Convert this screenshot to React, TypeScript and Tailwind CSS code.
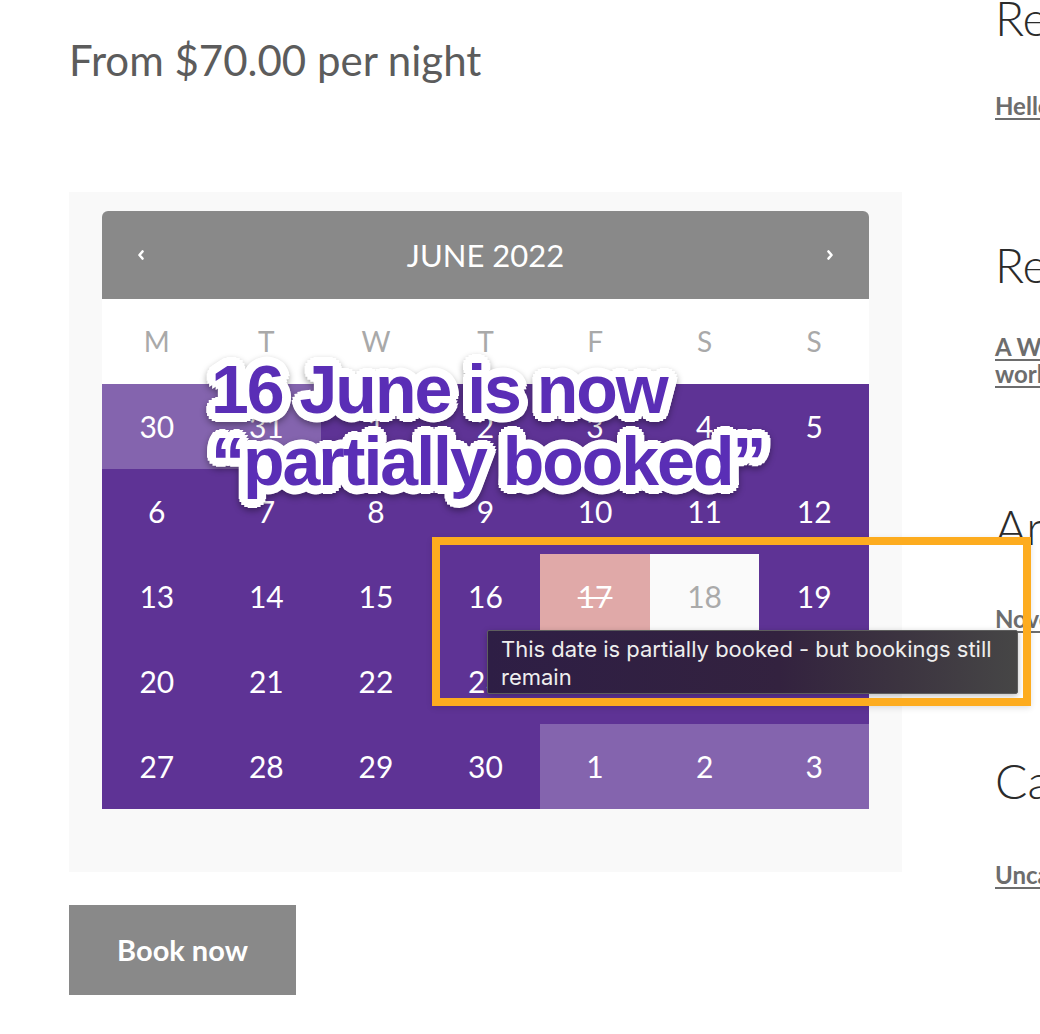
import React from 'react';

type Day = { n: number; kind?: 'other' | 'booked' | 'off' };

const weeks: Day[][] = [
  [{ n: 30, kind: 'other' }, { n: 31, kind: 'other' }, { n: 1 }, { n: 2 }, { n: 3 }, { n: 4 }, { n: 5 }],
  [{ n: 6 }, { n: 7 }, { n: 8 }, { n: 9 }, { n: 10 }, { n: 11 }, { n: 12 }],
  [{ n: 13 }, { n: 14 }, { n: 15 }, { n: 16 }, { n: 17, kind: 'booked' }, { n: 18, kind: 'off' }, { n: 19 }],
  [{ n: 20 }, { n: 21 }, { n: 22 }, { n: 23 }, { n: 24 }, { n: 25 }, { n: 26 }],
  [{ n: 27 }, { n: 28 }, { n: 29 }, { n: 30 }, { n: 1, kind: 'other' }, { n: 2, kind: 'other' }, { n: 3, kind: 'other' }],
];

const weekdays = ['M', 'T', 'W', 'T', 'F', 'S', 'S'];

function cellClass(kind?: Day['kind']) {
  if (kind === 'other') return 'bg-[#8464ae] text-white';
  if (kind === 'booked') return 'bg-[#e0a9a8] text-white line-through decoration-white decoration-2';
  if (kind === 'off') return 'bg-[#fafafa] text-[#aaaaaa]';
  return 'bg-[#5e3395] text-white';
}

function Chevron({ dir }: { dir: 'left' | 'right' }) {
  return (
    <svg width="10" height="14" viewBox="0 0 10 14" fill="none">
      <path
        d={dir === 'left' ? 'M6.5 3.5L3.5 7l3 3.5' : 'M3.5 3.5l3 3.5-3 3.5'}
        stroke="white"
        strokeWidth="2.6"
        strokeLinecap="round"
        strokeLinejoin="round"
      />
    </svg>
  );
}

function Calendar() {
  return (
    <div className="w-[767px]">
      <div className="h-[88px] bg-[#898989] rounded-t-[6px] flex items-center justify-between px-[34px]">
        <Chevron dir="left" />
        <span className="text-white text-[31px]">JUNE 2022</span>
        <Chevron dir="right" />
      </div>
      <div className="grid grid-cols-7 h-[85px] bg-white">
        {weekdays.map((d, i) => (
          <div key={i} className="flex items-center justify-center text-[28px] text-[#a9a9a9]">
            {d}
          </div>
        ))}
      </div>
      {weeks.map((week, wi) => (
        <div key={wi} className="grid grid-cols-7 h-[85px]">
          {week.map((day, di) => (
            <div key={di} className={`flex items-center justify-center text-[30px] ${cellClass(day.kind)}`}>
              {day.n}
            </div>
          ))}
        </div>
      ))}
    </div>
  );
}

function Sidebar() {
  const heading = 'text-[48px] font-light leading-[1.2] text-[#2b2b2b] whitespace-nowrap';
  const link = 'text-[24px] font-bold leading-[27px] text-[#6d6d6d] underline underline-offset-[3px] whitespace-nowrap';
  return (
    <div className="ml-[93px] w-[320px] shrink-0 flex flex-col mt-[-11px]">
      <h2 className={heading}>Recent Posts</h2>
      <a className={`${link} mt-[45px]`}>Hello world!</a>
      <h2 className={`${heading} mt-[117px]`}>Recent Comments</h2>
      <a className={`${link} mt-[40px]`}>A WordPress Commenter on</a>
      <a className={link}>world!</a>
      <h2 className={`${heading} mt-[111px]`}>Archives</h2>
      <a className={`${link} mt-[49px]`}>November 2021</a>
      <h2 className={`${heading} mt-[120px]`}>Categories</h2>
      <a className={`${link} mt-[52px]`}>Uncategorized</a>
    </div>
  );
}

const outline =
  '[text-shadow:9px_0_0_#fff,8.3px_3.4px_0_#fff,6.4px_6.4px_0_#fff,3.4px_8.3px_0_#fff,0_9px_0_#fff,-3.4px_8.3px_0_#fff,-6.4px_6.4px_0_#fff,-8.3px_3.4px_0_#fff,-9px_0_0_#fff,-8.3px_-3.4px_0_#fff,-6.4px_-6.4px_0_#fff,-3.4px_-8.3px_0_#fff,0_-9px_0_#fff,3.4px_-8.3px_0_#fff,6.4px_-6.4px_0_#fff,8.3px_-3.4px_0_#fff,5px_0_0_#fff,-5px_0_0_#fff,0_5px_0_#fff,0_-5px_0_#fff]';

export default function App() {
  return (
    <div className="relative w-full h-[1034px] overflow-hidden bg-white font-['Lato','Noto_Sans',sans-serif]">
      <div className="flex pl-[69px]">
        <div className="w-[833px] shrink-0 pt-[35px]">
          <p className="text-[42px] leading-[1.2] text-[#5c5c5c]">From $70.00 per night</p>
          <div className="mt-[106.6px] bg-[#f9f9f9] px-[33px] pt-[19px] pb-[63px]">
            <Calendar />
          </div>
          <button className="mt-[33px] w-[227px] h-[90px] bg-[#898989] text-white text-[29px] font-bold">
            Book now
          </button>
        </div>
        <Sidebar />
      </div>

      {/* tooltip for the hovered date */}
      <div className="absolute left-[487px] top-[630px] w-[531px] h-[64px] bg-[linear-gradient(90deg,#2e1e45_0%,#33223f_55%,#3c3440_78%,#464646_100%)] border border-[#5e5e5e] rounded-[2px] shadow-[0_2px_6px_rgba(0,0,0,0.25)] px-[13px] pt-[4px] font-['Inter',sans-serif] text-[22px] leading-[28px] text-[#eeeeee] whitespace-nowrap">
        This date is partially booked - but bookings still
        <br />
        remain
      </div>

      {/* highlight box */}
      <div className="absolute left-[432px] top-[537px] w-[599px] h-[169px] border-[8px] border-[#fdac1f] shadow-[0_2px_6px_rgba(0,0,0,0.12)]" />

      {/* annotation */}
      <div className="absolute left-[211px] top-[353px] drop-shadow-[0_3px_3px_rgba(0,0,0,0.35)]">
        <p
          className={`font-['Liberation_Sans',Arial,sans-serif] font-bold text-[68px] leading-[72px] tracking-[-2px] text-[#5a2eb6] whitespace-nowrap ${outline}`}
        >
          16 June is now
          <br />
          “partially booked”
        </p>
      </div>
    </div>
  );
}
